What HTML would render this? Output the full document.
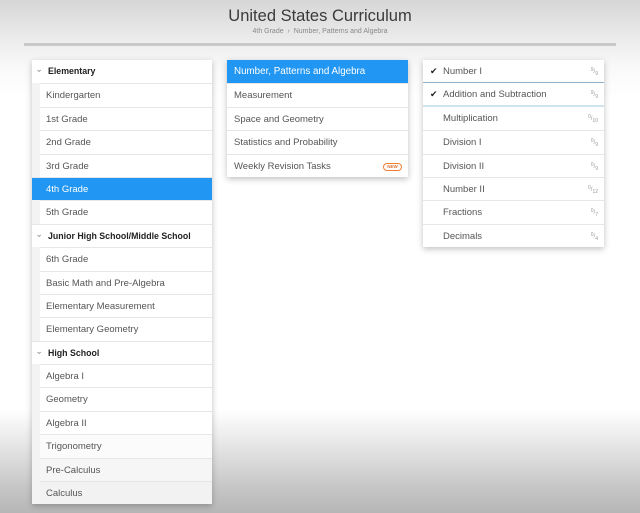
<!DOCTYPE html>
<html><head><meta charset="utf-8"><style>
*{margin:0;padding:0;box-sizing:border-box}
body{width:640px;height:513px;overflow:hidden;position:relative;font-family:"Liberation Sans",sans-serif;
background:linear-gradient(to bottom,#d6d6d6 0px,#ececec 40px,#fafafa 70px,#fff 100px,#fff 410px,#e6e6e6 445px,#c8c8c8 485px,#b6b6b6 513px);}
.title{position:absolute;top:7px;left:0;width:640px;text-align:center;font-size:16.5px;color:#3a3a3a;}
.crumb{position:absolute;top:28px;left:0;width:640px;text-align:center;font-size:7px;color:#888;}
.rule{position:absolute;top:43px;left:24px;width:592px;height:3px;background:#c9c9c9;}
.panel{position:absolute;top:60px;background:#fff;box-shadow:0 2px 6px rgba(0,0,0,.25);}
.row{height:23.4px;line-height:23.4px;font-size:9.5px;color:#555;position:relative;border-top:1px solid #e6e6e6;white-space:nowrap}
.row:first-child{border-top:none}
#L{left:32px;width:180px;background:#f3f3f3}
#L .it{margin-left:8px;background:#fff;padding-left:6px}
#L .hd{background:#fff;padding-left:16px;font-weight:bold;color:#222;font-size:8.8px}
#L .hd:before{content:"\203A";position:absolute;left:6px;top:-1px;transform:rotate(90deg);font-size:8px;color:#666;font-weight:normal}
.sel{background:#2196f3!important;color:#fff!important;margin-left:0!important;padding-left:14px!important}
#M{left:227px;width:181px}
#M .row{padding-left:7px}
#M .sel{padding-left:7px!important;font-size:9.8px}
.new{position:absolute;right:6px;top:8px;width:19px;height:8px;border:1px solid #f08030;border-radius:5px;font-size:4.5px;line-height:6px;text-align:center;color:#e07030;font-weight:bold}
#R{left:423px;width:181px}
#R .row{padding-left:20px}
#R .ck{position:absolute;left:7px;top:0;font-size:9px;color:#222}
#R .fr{position:absolute;right:6px;top:0;font-size:6px;line-height:20px;color:#999}
#R .fr sup{font-size:5px;vertical-align:2px}
#R .fr sub{font-size:5px;vertical-align:-2px}
#R .b1{border-bottom:1.5px solid #8fb0cc}
#R .b2{border-bottom:2px solid #cfe3ef}
</style></head><body>
<div class="title">United States Curriculum</div>
<div class="crumb">4th Grade &nbsp;›&nbsp; Number, Patterns and Algebra</div>
<div class="rule"></div>

<div class="panel" id="L">
<div class="row hd">Elementary</div>
<div class="row it">Kindergarten</div>
<div class="row it">1st Grade</div>
<div class="row it">2nd Grade</div>
<div class="row it">3rd Grade</div>
<div class="row it sel">4th Grade</div>
<div class="row it">5th Grade</div>
<div class="row hd">Junior High School/Middle School</div>
<div class="row it">6th Grade</div>
<div class="row it">Basic Math and Pre-Algebra</div>
<div class="row it">Elementary Measurement</div>
<div class="row it">Elementary Geometry</div>
<div class="row hd">High School</div>
<div class="row it">Algebra I</div>
<div class="row it">Geometry</div>
<div class="row it">Algebra II</div>
<div class="row it" style="background:#fbfbfb">Trigonometry</div>
<div class="row it" style="background:#f6f6f6">Pre-Calculus</div>
<div class="row it" style="background:#f2f2f2">Calculus</div>
</div>

<div class="panel" id="M">
<div class="row sel">Number, Patterns and Algebra</div>
<div class="row">Measurement</div>
<div class="row">Space and Geometry</div>
<div class="row">Statistics and Probability</div>
<div class="row">Weekly Revision Tasks<span class="new">NEW</span></div>
</div>

<div class="panel" id="R">
<div class="row b1"><span class="ck">✔</span>Number I<span class="fr"><sup>9</sup>/<sub>9</sub></span></div>
<div class="row b2" style="border-top:none"><span class="ck">✔</span>Addition and Subtraction<span class="fr"><sup>9</sup>/<sub>9</sub></span></div>
<div class="row" style="border-top:none">Multiplication<span class="fr"><sup>0</sup>/<sub>10</sub></span></div>
<div class="row">Division I<span class="fr"><sup>0</sup>/<sub>9</sub></span></div>
<div class="row">Division II<span class="fr"><sup>0</sup>/<sub>9</sub></span></div>
<div class="row">Number II<span class="fr"><sup>0</sup>/<sub>12</sub></span></div>
<div class="row">Fractions<span class="fr"><sup>0</sup>/<sub>7</sub></span></div>
<div class="row">Decimals<span class="fr"><sup>0</sup>/<sub>4</sub></span></div>
</div>
</body></html>
